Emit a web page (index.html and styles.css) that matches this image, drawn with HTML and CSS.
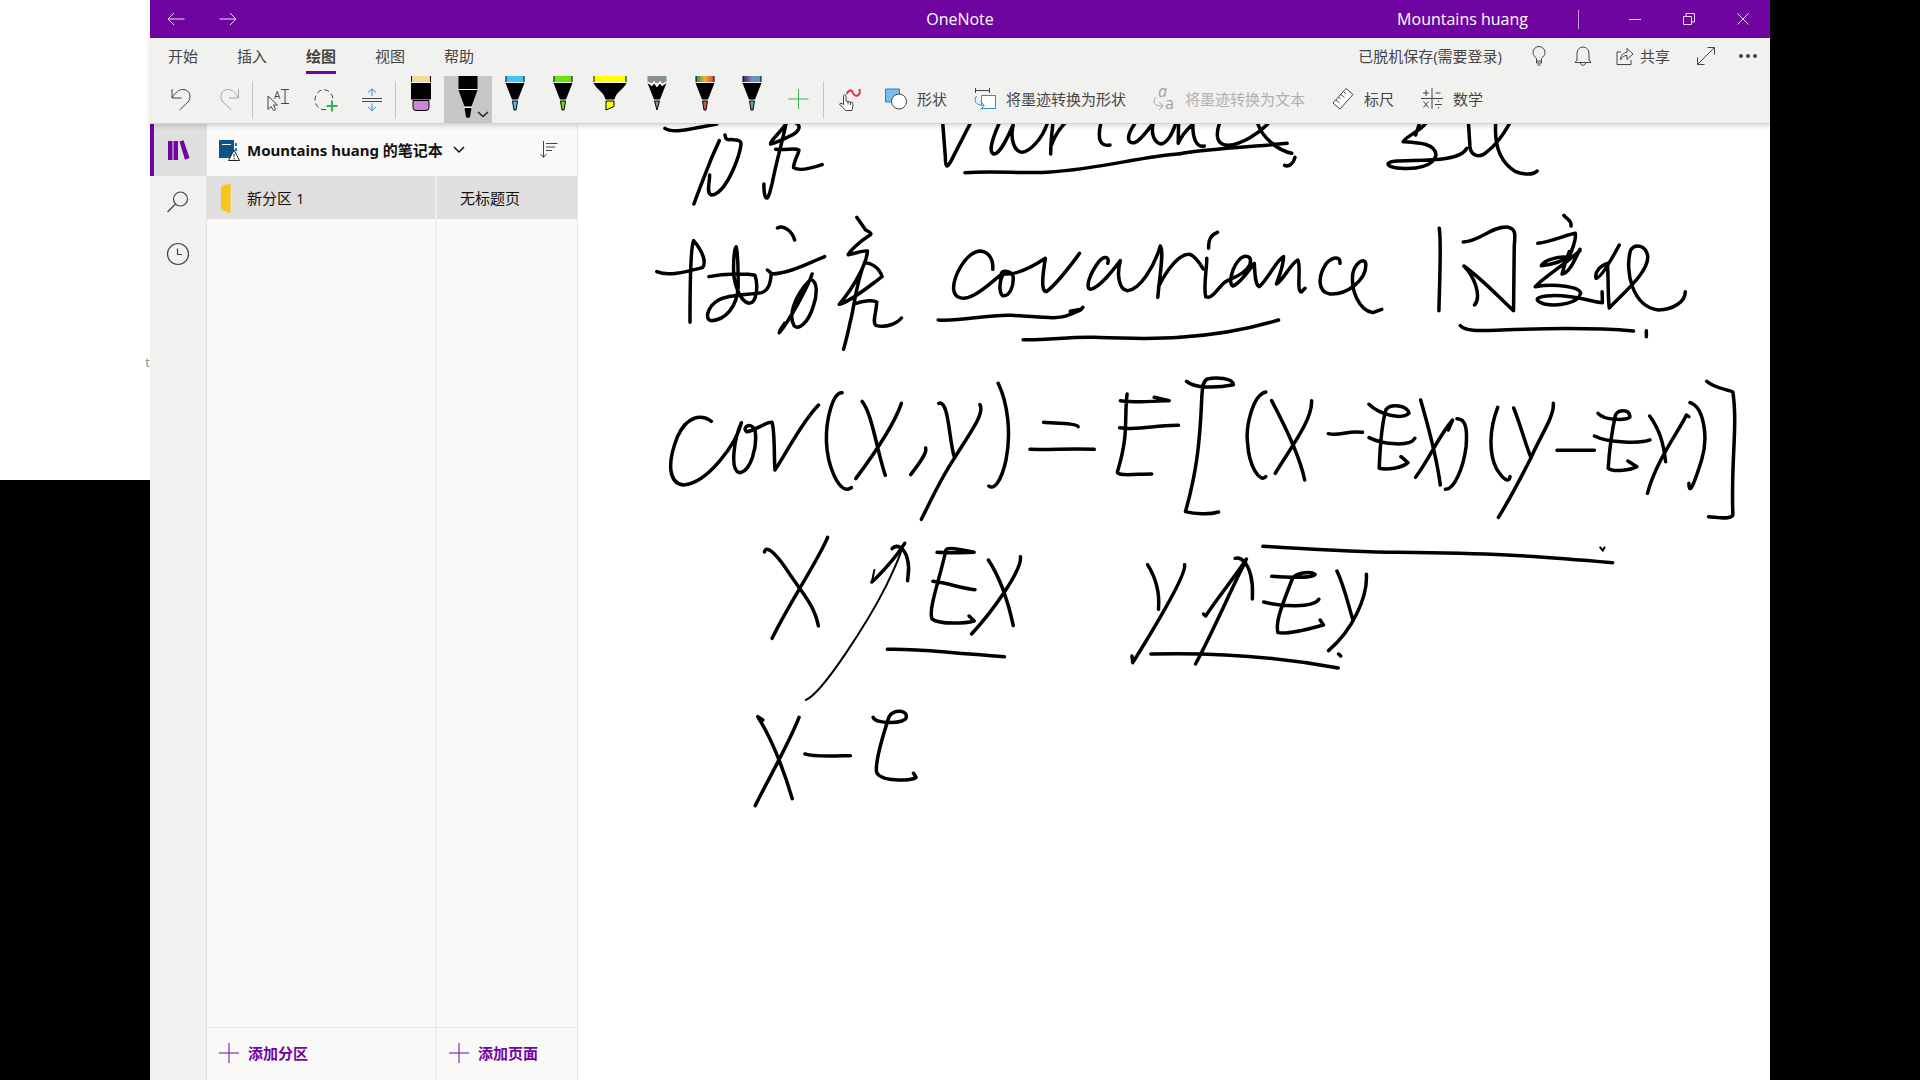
FILE: index.html
```html
<!DOCTYPE html>
<html lang="zh-CN">
<head>
  <meta charset="UTF-8">
  <title>OneNote</title>
  <link rel="stylesheet" href="styles.css">
</head>
<body>

  <div class="behind">
    <div class="behind-page">t</div>
  </div>

  <div class="window">
    <header class="titlebar">
      <div class="history">
        <button aria-label="后退"><svg width="18" height="14" viewBox="0 0 18 14"><path d="M17.500 7H1M7 1L1 7l6 6"/></svg></button>
        <button aria-label="前进"><svg width="18" height="14" viewBox="0 0 18 14"><path d="M.5 7H17M11 1l6 6-6 6"/></svg></button>
      </div>
      <h1>OneNote</h1>
      <div class="account">
        <span class="user">Mountains huang</span>
        <span class="bar"></span>
        <button aria-label="最小化"><svg width="12" height="12" viewBox="0 0 12 12"><path d="M0 6.500h12"/></svg></button>
        <button aria-label="还原"><svg width="12" height="12" viewBox="0 0 12 12"><path d="M.5 3.500h8v8h-8zM3 3.500V.5h8.500V9H8.500"/></svg></button>
        <button aria-label="关闭"><svg width="12" height="12" viewBox="0 0 12 12"><path d="M.5.5l11 11M11.500.5l-11 11"/></svg></button>
      </div>
    </header>

    <div class="ribbon">
      <div class="tabrow">
        <nav class="tabs">
          <a href="#">开始</a>
          <a href="#">插入</a>
          <a href="#" class="current">绘图</a>
          <a href="#">视图</a>
          <a href="#">帮助</a>
        </nav>
        <div class="status">
          <span>已脱机保存(需要登录)</span>
          <button class="bulb" aria-label="操作说明"><svg width="14" height="20" viewBox="0 0 14 20"><path d="M4.500 15v-2.500C3 10.500 1 9.500 1 6.500a6 6 0 0 1 12 0c0 3-2 4-3.500 6V15zM4.500 15v2h5v-2M5.500 19h3"/></svg></button>
          <button class="bell" aria-label="通知"><svg width="18" height="20" viewBox="0 0 18 20"><path d="M1 16.500h16L15 14V7a6 6 0 0 0-12 0v7zM6.500 17c0 3 5 3 5 0"/></svg></button>
          <button class="share"><svg width="18" height="20" viewBox="0 0 18 20"><path d="M5 6H1v12.500h14V14M4.500 14c0-5 3-7.500 6.500-7.500V2.500L17 8l-6 5.500v-4c-3 0-5 1.500-6.500 4.500z"/></svg>共享</button>
          <button class="expand" aria-label="全屏"><svg width="20" height="20" viewBox="0 0 20 20"><path d="M1.500 18.500l17-17M11.500 1.500h7v7M1.500 11.500v7h7"/></svg></button>
          <button class="more" aria-label="更多"><svg width="18" height="4" viewBox="0 0 18 4"><circle cx="2" cy="2" r="2"/><circle cx="9" cy="2" r="2"/><circle cx="16" cy="2" r="2"/></svg></button>
        </div>
      </div>

      <div class="tools">
        <button class="tool" aria-label="撤消"><svg width="24" height="24"><path d="M2 1v9h9.500M2 10C6 3.500 9 1.500 13 1.500c7 0 9 8 5 12.500l-8.500 8"/></svg></button>
        <button class="tool off" aria-label="恢复"><svg width="24" height="24"><path d="M21.500 1v9H12M21.500 10C18 3.500 15 1.500 11 1.500c-7 0-9 8-5 12.500l8.500 8"/></svg></button>
        <span class="sep"></span>
        <button class="tool" aria-label="选择对象或键入文本"><svg width="24" height="24"><path d="M2 8v13.500l3-3 2.500 4 2-1-2-4.500h4zM15 1.500h8M15 15.500h8M19 1.500v14"/><text x="8" y="11">A</text></svg></button>
        <button class="tool" aria-label="套索选择"><svg width="24" height="24"><path class="dash" d="M13 21.500A9 10 0 1 1 20 12"/><path class="green" d="M19 12.500v11M13.500 18h11"/></svg></button>
        <button class="tool" aria-label="插入空间"><svg width="24" height="24"><path d="M2 10.500h20M2 13.500h20"/><path class="blue" d="M12 8V1M8 4.500L12 .8l4 3.700M12 15.500v7M8 19l4 3.700 4-3.700"/></svg></button>
        <span class="sep"></span>

        <div class="pens">
          <button aria-label="橡皮擦"><svg width="48" height="47"><path fill="#f2da94" d="M14.500 0h19v6h-19z"/><path fill="#000" d="M14 0h1v6h-1zM33 0h1v6h-1zM14 7h20v16.500H14z"/><path fill="#cf85d8" stroke="#000" d="M16 24.500h16v7q0 3-3 3H19q-3 0-3-3z"/></svg></button>
          <button class="picked" aria-label="黑色笔"><svg width="48" height="47"><path fill="#fff" d="M15 12h18v3H15zM20 30h8v3h-8z"/><path fill="#000" d="M14.500 0h19v13h-19zM14.500 14h19l-6 16.500h-7zM20.500 32h7l-1.500 9q-2 2-4 0z"/><path fill="none" stroke="#222" stroke-width="1.500" d="M34 36l5 4.500 5-4.500"/></svg></button>
          <button aria-label="蓝色笔"><svg width="48" height="47"><path fill="#3fc8f4" d="M15 0h18v6H15z"/><path fill="#000" d="M14.500 0h1v6h-1zM32.500 0h1v6h-1zM14.500 7h19L27 23.500h-6z"/><path fill="#3fc8f4" stroke="#000" d="M21.500 25h5l-1.500 9h-2z"/></svg></button>
          <button aria-label="绿色笔"><svg width="48" height="47"><path fill="#6fe010" d="M15 0h18v6H15z"/><path fill="#000" d="M14.500 0h1v6h-1zM32.500 0h1v6h-1zM14.500 7h19L27 23.500h-6z"/><path fill="#6fe010" stroke="#000" d="M21.500 25h5l-1.500 9h-2z"/></svg></button>
          <button aria-label="黄色荧光笔"><svg width="48" height="47"><path fill="#ff0" d="M8 0h32v6H8z"/><path fill="#000" d="M7.500 0h1v6h-1zM39.500 0h1v6h-1zM7.500 7h33c-3 7-10 8-12 16.500h-9C17.500 15 10.500 14 7.500 7z"/><path fill="#ff0" stroke="#000" d="M20 25h8v5.500L20 34z"/></svg></button>
          <button aria-label="铅笔"><svg width="48" height="47"><path fill="#859090" d="M14.500 0h19v7H14.500z"/><path fill="#000" d="M14.500 7l4.500 3 2-3 3 4 3-4 2 3 4.500-3L27 23.500h-6z"/><path fill="none" stroke="#fff" stroke-width="1.500" d="M14.500 6l4.500 3 2-3 3 4 3-4 2 3 4.500-3"/><path fill="#859090" stroke="#000" d="M21.500 25h5L24 34z"/></svg></button>
          <button aria-label="彩虹笔"><svg width="48" height="47"><defs><linearGradient id="rainbow"><stop offset="0" stop-color="#159a50"/><stop offset=".5" stop-color="#f0b030"/><stop offset="1" stop-color="#d8442c"/></linearGradient></defs><path fill="url(#rainbow)" d="M15 0h18v6H15z"/><path fill="#000" d="M14.500 0h1v6h-1zM32.500 0h1v6h-1zM14.500 7h19L27 23.500h-6z"/><path fill="#c85a48" stroke="#000" d="M21.500 25h5l-1.500 9h-2z"/></svg></button>
          <button aria-label="银河笔"><svg width="48" height="47"><defs><linearGradient id="galaxy"><stop offset="0" stop-color="#382a5c"/><stop offset=".5" stop-color="#7890c0"/><stop offset="1" stop-color="#4ba0a8"/></linearGradient></defs><path fill="url(#galaxy)" d="M15 0h18v6H15z"/><path fill="#000" d="M14.500 0h1v6h-1zM32.500 0h1v6h-1zM14.500 7h19L27 23.500h-6z"/><path fill="#58aab4" stroke="#000" d="M21.500 25h5l-1.500 9h-2z"/></svg></button>
          <button aria-label="添加笔"><svg width="48" height="47"><path fill="none" stroke="#3bb04e" d="M23.500 13v20M13.500 23h20"/></svg></button>
        </div>
        <span class="sep"></span>

        <button class="tool" aria-label="用手指绘图"><svg width="24" height="24"><path fill="#fff" d="M6.500 16V7.500q1.500-2 2.500 0V13l6 1.500q1.500.5 1 2.500l-1 5.500H8.500L2.500 16q1-2 4 .5zM11 13.500v3M13.500 14v3"/><path class="red" d="M10 6c1-4 5-5 6-1 2 5 8 3 6.500-4"/></svg></button>
        <button class="tool wide"><svg width="22" height="24"><path fill="#7cbcec" stroke="#2f7fba" d="M.5 2h14v13H.5z"/><circle cx="14" cy="14.500" r="7.500" fill="#fff"/></svg>形状</button>
        <button class="tool wide"><svg width="22" height="24"><path d="M1 3.500h15M1.500 1v5M15.500 1v5"/><path class="blue" fill="#fff" d="M7.500 8.500h14v13h-14z"/><path class="blue" fill="#f1f1f0" d="M2.500 9c-3 5-1 9 7 9.500M6.500 14.500l4 4-4 4"/></svg>将墨迹转换为形状</button>
        <button class="tool wide off"><svg width="22" height="24"><text x="5" y="10" class="hand">a</text><text x="12" y="22" class="big">a</text><path d="M3 10c-4 5-2 9 6 9M6 15l4 4-4 4"/></svg>将墨迹转换为文本</button>
        <button class="tool wide"><svg width="22" height="24"><path fill="#fff" d="M14 1.500l7 6L8 22l-7-6zM11.500 4.500l2 2M9 7.500l3.500 3M6.500 10l2 2M4 13l3.500 3"/></svg>标尺</button>
        <button class="tool wide"><svg width="22" height="24"><path d="M11 1v21M0 11.500h22M5 3v6M2 6h6M14.500 6h5M2.500 14.500l5 6M7.500 14.500l-5 6M14 17.500h7M17.500 13.500v1.500M17.500 20v1.500"/></svg>数学</button>
      </div>
    </div>

    <main class="body">
      <nav class="rail">
        <button class="on" aria-label="笔记本"><svg width="24" height="24"><path fill="#7004a0" d="M2 3h4.500v19H2zM7.500 3H12v19H7.500zM13.500 3.500l4-1.200L23.500 20l-4.500 1.800z"/></svg></button>
        <button aria-label="搜索"><svg width="24" height="24"><circle cx="14.500" cy="9" r="7"/><path d="M9.500 14l-8 8"/></svg></button>
        <button aria-label="最近"><svg width="24" height="24"><circle cx="12" cy="12" r="10.500"/><path d="M11.500 6.500v6H16"/></svg></button>
      </nav>

      <div class="notebook">
        <div class="book">
          <svg width="22" height="24"><path fill="#0d5288" stroke="none" d="M1 2h15v18H1z"/><path stroke="#fff" d="M4 6.500h9"/><path stroke="#1b7cc0" stroke-width="2" stroke-dasharray="3 2" d="M18 5v10"/><path fill="#fff" stroke="#222" d="M16 12l5.500 10.500h-11zM16 16v3M16 20v1.500"/></svg>
          <button class="name">Mountains huang 的笔记本<svg width="12" height="8"><path d="M1 1l5 5 5-5"/></svg></button>
          <button class="sort" aria-label="排序"><svg width="18" height="18"><path d="M3.500 0v16M.5 13l3 3.500 3-3.500M6 2.500h11.500M6 6h9M6 9.500h6"/></svg></button>
        </div>
        <div class="lists">
          <section>
            <a href="#" class="entry"><svg width="10" height="32"><path fill="#f9c51a" d="M9.500 1v30L1 28Q0 27 0 25V7q0-2 1-3z"/></svg>新分区 1</a>
            <button class="add"><svg width="20" height="20"><path d="M10 0v20M0 10h20"/></svg>添加分区</button>
          </section>
          <section class="pages">
            <a href="#" class="entry">无标题页</a>
            <button class="add"><svg width="20" height="20"><path d="M10 0v20M0 10h20"/></svg>添加页面</button>
          </section>
        </div>
      </div>

      <div class="canvas">
        <svg class="ink" role="img" aria-label="手写笔记">
          <!-- variance -->
          <g transform="translate(62 -4) scale(.3571 .3333)">
            <path d="M70 25C90 40 130 30 215 12M238 45C240 65 250 57 262 59C290 60 285 70 275 110C250 190 220 225 200 225C185 220 195 190 195 165M222 62L200 115C180 170 165 210 151 252"/>
            <path d="M438 10C455 20 440 40 420 48C400 60 370 72 366 72C362 65 395 35 410 10M408 15C400 60 385 110 370 190C362 225 358 240 352 232C346 220 347 200 347 192M380 88C410 92 430 82 445 90C445 100 430 125 430 143C445 155 480 145 510 134"/>
            <path d="M848 12L855 110C855 150 862 140 870 125L924 12M1005 12C985 60 975 100 992 102C1010 100 1030 50 1045 15C1035 60 1050 95 1070 97C1090 95 1125 60 1140 12M1156 12C1152 50 1150 80 1150 102M1152 75C1165 40 1175 25 1190 10M1290 12C1280 60 1290 80 1316 75M1385 12C1360 50 1365 72 1385 68C1405 60 1420 30 1437 10C1430 40 1440 70 1460 72C1480 65 1490 40 1500 12"/>
            <path d="M910 158C1000 152 1080 162 1150 156C1290 146 1400 110 1512 101"/>
            <!-- covariance -->
            <path d="M47 455C80 470 130 455 175 443C185 430 180 400 150 362C142 380 140 500 140 607M193 470C240 460 300 460 322 466C330 490 330 550 305 550C280 545 262 490 262 450C262 400 265 380 269 380C275 400 275 450 275 500C272 560 240 600 200 602C180 600 188 560 220 540C250 522 310 525 340 518C365 510 365 480 368 460L357 450M368 462C420 460 470 430 517 410"/>
            <path d="M385 324C400 315 425 330 433 360M482 462C470 500 420 600 390 638C392 625 400 620 405 610M478 478C500 485 495 530 485 560C470 610 445 630 432 618C415 590 430 530 478 478"/>
            <path d="M607 292L632 330C650 340 650 343 640 348C615 365 590 390 583 404C600 402 625 390 637 393C635 430 600 500 558 553C590 545 640 500 678 470C670 440 640 425 628 430C605 490 600 560 590 600C580 650 575 670 570 688M600 552C630 540 655 540 663 546C662 580 650 605 660 616C690 625 720 610 732 594"/>
            <path d="M988 448C990 410 970 393 950 393C910 400 878 470 878 505C880 540 910 540 935 525C970 505 1000 470 1020 458C1005 480 1005 515 1015 527C1035 530 1047 500 1045 470C1040 450 1015 452 1012 460C1050 470 1100 440 1135 415C1130 450 1120 515 1138 515C1170 490 1210 430 1231 400"/>
            <path d="M1310 430C1315 410 1300 405 1285 425C1260 460 1245 505 1262 508C1290 500 1325 450 1345 422C1335 460 1340 510 1365 512C1400 510 1440 440 1457 378C1468 395 1455 470 1450 532M1452 500C1475 450 1510 400 1540 403C1555 410 1568 430 1577 447"/>
            <path d="M835 600C900 605 970 583 1040 586C1120 590 1170 600 1200 585C1225 575 1235 572 1240 562M1205 574L1235 568M1073 659C1150 660 1200 650 1270 652C1370 656 1440 658 1512 652"/>
          </g>
          <g transform="translate(602 -4) scale(.3571 .3333)">
            <path d="M-4 12L-5 70C3 50 23 25 36 12C35 50 45 85 68 78M110 12C98 50 105 75 135 76C175 72 220 40 246 12M218 12C230 50 270 90 313 100M322 112C318 130 305 142 293 136M0 101C60 88 150 85 300 70"/>
            <path d="M688 10C670 35 625 55 625 65C670 68 715 70 717 105C710 140 660 148 620 145C580 142 570 128 600 124C660 118 780 130 803 85M660 45L670 12M808 12L812 80C815 110 840 115 860 95C885 75 905 45 922 12M884 12C880 80 900 130 940 155C960 165 990 165 1000 153"/>
            <path d="M105 337C85 345 80 360 80 385M75 415C75 450 65 500 72 530C90 540 105 505 125 487C150 470 180 465 195 435C205 405 180 405 170 415C145 440 135 490 148 498C170 490 200 440 208 430C210 460 210 495 222 500C245 480 270 420 290 410C290 440 270 490 270 492C290 480 310 430 330 420C340 440 325 515 340 516L350 505"/>
            <path d="M448 430C450 405 425 412 410 430C385 470 385 515 420 522C465 525 525 480 520 430C515 410 490 430 484 460C478 510 500 570 540 578L565 568M0 652C100 645 200 625 276 600"/>
            <path d="M726 325C732 360 728 450 725 572M793 366C840 365 870 320 915 321C945 325 937 350 936 380L934 572C900 540 850 480 795 438C825 470 845 530 825 555"/>
            <path d="M1075 286C1085 300 1097 300 1095 318M1002 370C1040 365 1080 345 1107 340C1110 360 1095 400 1085 420M1012 437C1040 435 1080 420 1085 412C1060 408 1020 420 1012 437M1120 388C1105 420 1090 460 1070 462C1075 440 1085 410 1090 395M1120 392C1070 440 1020 470 995 500C1050 490 1120 500 1122 520C1115 550 1060 560 1020 552C985 540 1000 528 1040 527C1110 525 1160 548 1183 548L1182 515"/>
            <path d="M1230 375C1215 405 1180 475 1165 475C1160 455 1180 435 1197 430C1200 480 1198 530 1202 564C1240 520 1310 460 1310 410C1305 375 1275 370 1262 390C1245 450 1265 560 1340 570C1380 570 1415 545 1415 515M785 617C800 635 840 632 900 630C1020 625 1150 622 1270 633M1306 632V650"/>
          </g>
          <!-- cov(X,Y) = E -->
          <g transform="translate(62 236) scale(.3571 .3333)">
            <path d="M200 184C170 160 130 170 105 230C75 310 80 370 122 375C190 370 270 250 284 188C265 230 250 330 278 338C310 335 330 260 322 210C310 185 285 200 298 215C320 215 350 185 370 187C378 220 375 290 378 330C410 280 450 190 500 135"/>
            <path d="M566 98C540 95 520 180 522 245C525 320 555 390 582 388L592 383M622 124C650 160 665 280 687 346M732 130C710 200 650 290 604 356M800 264C805 280 775 320 758 344"/>
            <path d="M837 130C865 120 865 240 880 290M952 134C965 160 930 210 880 295C840 360 815 420 788 478M1003 70C1030 130 1040 220 1025 300C1010 370 990 390 977 378"/>
            <path d="M1130 187C1160 190 1228 190 1227 200M1092 268C1150 270 1200 265 1272 268M1345 122C1390 128 1430 125 1482 122L1440 112M1364 102C1355 180 1370 220 1337 335C1335 350 1390 342 1433 342M1343 203C1400 212 1440 195 1508 196"/>
          </g>
          <!-- [(X-EX)(Y-EY)] -->
          <g transform="translate(602 236) scale(.3635 .3333)">
            <path d="M18 64C40 85 100 85 147 74C145 55 100 50 75 57C60 65 62 90 60 110C55 250 45 340 15 455C40 462 80 465 106 456M236 96C200 105 180 200 186 250C190 320 220 370 236 350"/>
            <path d="M252 122C290 200 330 290 343 360M362 122C365 180 300 270 262 340M408 221C440 230 460 210 502 217M520 133C550 165 610 180 630 160C625 135 580 130 567 148C555 190 550 270 548 325C570 330 610 325 627 308L608 290M520 233C560 255 635 260 646 235"/>
            <path d="M662 120C680 190 705 280 716 375M738 210L750 180C710 230 690 290 648 352M762 176C790 175 790 220 787 260C780 320 755 390 730 388"/>
            <path d="M874 142C850 210 850 280 870 325C890 360 905 370 908 350M918 144C935 190 950 250 965 292M1027 130C1030 170 990 230 965 295C930 370 900 430 876 472M1037 271H1140"/>
            <path d="M1150 160C1170 185 1240 180 1238 170C1235 145 1205 150 1198 165C1185 230 1180 290 1178 325C1195 338 1240 330 1257 320L1232 303M1140 228C1180 250 1270 250 1293 240M1292 168C1320 210 1330 250 1336 305M1400 170L1393 165C1380 200 1310 300 1286 400"/>
            <path d="M1403 128C1440 140 1455 230 1435 300C1415 370 1400 410 1400 370M1449 64C1470 85 1505 88 1521 96C1535 200 1515 300 1521 465C1515 480 1480 472 1454 470"/>
            <path d="M228 559C400 570 480 576 600 577C850 580 950 585 1190 608"/>
            <path class="thin" d="M1156 562L1163 572L1168 562"/>
          </g>
          <!-- X, EX, Y, EY and the unfinished last line -->
          <g transform="translate(152 396) scale(.4209 .3333)">
            <path d="M82 96C85 75 105 95 130 140C165 210 200 250 210 318M232 52C210 120 140 250 100 355M415 70C395 110 360 160 337 186M385 86C395 72 415 80 422 120C428 150 422 165 422 182"/>
            <path class="thin" d="M180 540C220 520 330 300 370 200C385 160 405 110 410 78M337 186L343 150"/>
            <path d="M492 97C520 100 550 98 580 97C560 92 515 78 513 90C500 170 470 270 480 297C500 315 560 310 580 303L568 288M482 184C520 190 550 205 582 209M614 120C640 170 660 240 673 317M690 110C695 150 620 280 574 342M374 388C450 385 500 398 652 410"/>
            <path d="M992 134C1010 170 1022 210 1018 268M1080 134C1085 160 1020 300 957 428L955 408M1106 432C1150 330 1200 180 1225 125M1227 117C1200 170 1160 230 1130 288L1125 282M1200 115C1215 110 1230 130 1237 165C1244 200 1241 220 1241 237"/>
            <path d="M1287 169C1320 172 1385 175 1390 163C1380 152 1340 158 1335 180C1310 260 1295 310 1302 338C1330 345 1380 325 1410 315L1402 300M1268 246C1310 260 1385 265 1399 238M1442 153C1460 200 1470 260 1480 300M1512 163C1515 230 1480 330 1422 392M1000 402C1150 397 1300 410 1445 444M1446 402L1451 408"/>
            <path d="M66 590L78 600M68 594C100 660 130 760 148 836M164 592C140 670 90 780 60 857M178 702C200 712 250 708 286 707M340 592C345 612 410 612 418 595C425 570 390 565 378 590C365 640 345 720 348 755C355 785 430 785 442 772L436 760"/>
          </g>
        </svg>
      </div>
    </main>
  </div>

</body>
</html>
```
FILE: styles.css
```css
* {
  box-sizing: border-box;
}

body {
  margin: 0;
  height: 100vh;
  display: grid;
  grid-template-columns: 150px 1fr 150px;
  background: #000;
  color: #444;
  font-family: "Open Sans", "Noto Sans CJK SC", sans-serif;
  font-size: 15px;
  line-height: 20px;
  overflow: hidden;
}

button {
  display: flex;
  align-items: center;
  justify-content: center;
  padding: 0;
  border: 0;
  background: none;
  color: inherit;
  font: inherit;
  white-space: nowrap;
}

a {
  color: inherit;
  text-decoration: none;
}

svg {
  display: block;
  flex: none;
  fill: none;
  stroke: #444;
}

/* the page behind the window */
.behind {
  display: grid;
  grid-template-rows: 4fr 5fr;
}

.behind-page {
  padding-top: 352px;
  background: #fff;
  color: #888;
  font-size: 13px;
  text-align: right;
}

.window {
  display: flex;
  flex-direction: column;
  min-width: 0;
  height: 100vh;
  background: #fff;
}

/* title bar */
.titlebar {
  display: grid;
  grid-template-columns: 1fr auto 1fr;
  align-items: center;
  height: 38px;
  background: #7004a0;
  color: #fff;
  font-size: 16px;
}

.titlebar svg {
  stroke: #f0dcf8;
}

.titlebar h1 {
  margin: 0;
  font-size: 16px;
  font-weight: normal;
}

.history {
  display: flex;
  gap: 34px;
  padding-left: 17px;
}

.account {
  display: flex;
  align-items: center;
  justify-content: flex-end;
  gap: 42px;
  padding-right: 21px;
}

.account .bar {
  width: 1px;
  height: 19px;
  margin: 0 8px;
  background: #c89add;
}

/* ribbon */
.ribbon {
  position: relative;
  background: #f1f1f0;
  border-bottom: 1px solid #d2d2d0;
  box-shadow: 0 2px 5px rgba(0, 0, 0, 0.15);
}

.tabrow {
  display: flex;
  justify-content: space-between;
  height: 38px;
}

.tabs {
  display: flex;
  gap: 39px;
  padding-left: 18px;
}

.tabs a {
  height: 36px;
  padding-top: 8px;
}

.tabs .current {
  border-bottom: 3px solid #7004a0;
  font-weight: bold;
}

.status {
  display: flex;
  align-items: center;
  padding: 0 13px 2px 0;
}

.status .bulb {
  margin-left: 30px;
}

.status .bell {
  margin-left: 28px;
}

.status .share {
  gap: 6px;
  margin-left: 24px;
}

.status .expand {
  margin-left: 26px;
}

.status .more {
  margin-left: 23px;
}

.more svg {
  fill: #444;
  stroke: none;
}

.tools {
  display: flex;
  align-items: center;
  height: 47px;
  padding-left: 8px;
}

.tool {
  width: 47px;
  height: 47px;
}

.tool svg {
  overflow: visible;
}

.tool.wide {
  width: auto;
  gap: 10px;
  padding: 0 14px 2px 13px;
}

.tool text {
  fill: #444;
  stroke: none;
  font-size: 10px;
}

.tool .hand,
.tool .big {
  fill: #a0a0a0;
  font-size: 16px;
}

.tool .hand {
  font-style: italic;
}

.off {
  color: #b0b0b0;
}

.off svg {
  stroke: #a8a8a8;
}

.dash {
  stroke-dasharray: 5 3;
}

.green {
  stroke: #3bb04e;
  stroke-width: 2;
}

.blue {
  stroke: #2b8fce;
}

.red {
  stroke: #e0304a;
  stroke-width: 2;
}

.sep {
  width: 1px;
  height: 38px;
  margin-right: 1px;
  background: #c4c4c4;
}

.pens {
  display: flex;
  width: 426px;
}

.pens button {
  flex: 1;
  min-width: 0;
}

.pens svg {
  stroke: none;
}

.pens .picked {
  background: #c6c6c5;
}

/* left rail and notebook lists */
.body {
  display: flex;
  flex: 1;
  min-height: 0;
}

.rail {
  width: 57px;
  background: #f1f1f0;
  border-right: 1px solid #e2e2e2;
}

.rail button {
  width: 56px;
  height: 52px;
}

.rail .on {
  padding-right: 4px;
  border-left: 4px solid #7004a0;
  background: #e1dfdd;
}

.rail svg {
  stroke-width: 1.2px;
}

.rail .on svg {
  stroke: none;
}

.notebook {
  display: flex;
  flex-direction: column;
  width: 371px;
  background: #f9f9f8;
  border-right: 1px solid #e8e8e8;
  color: #111;
}

.book {
  display: flex;
  align-items: center;
  height: 52px;
  padding: 0 19px 0 11px;
}

.book .name {
  gap: 10px;
  margin-left: 7px;
  font-family: "Noto Sans", "Noto Sans CJK SC", sans-serif;
  font-weight: bold;
}

.book .sort {
  margin-left: auto;
}

.name svg {
  stroke: #111;
  stroke-width: 1.5px;
}

.lists {
  display: grid;
  grid-template-columns: 230px 1fr;
  flex: 1;
}

.lists section {
  display: flex;
  flex-direction: column;
  justify-content: space-between;
  border-right: 2px solid #eeeeed;
}

.lists .pages {
  border-right: 0;
}

.entry {
  display: flex;
  align-items: center;
  gap: 16px;
  height: 43px;
  padding-left: 14px;
  background: #e1dfdd;
}

.entry svg {
  stroke: none;
}

.pages .entry {
  padding-left: 23px;
}

.add {
  justify-content: flex-start;
  gap: 9px;
  height: 53px;
  padding: 0 0 2px 12px;
  border-top: 1px solid #e8e8e8;
  color: #7004a0;
  font-weight: bold;
}

.add svg {
  stroke: #7004a0;
}

/* drawing canvas */
.canvas {
  flex: 1;
  min-width: 0;
}

.ink {
  width: 100%;
  height: 100%;
}

.ink path {
  stroke: #000;
  stroke-width: 3.5px;
  stroke-linecap: round;
  stroke-linejoin: round;
  vector-effect: non-scaling-stroke;
}

.ink .thin {
  stroke-width: 2px;
}
```
